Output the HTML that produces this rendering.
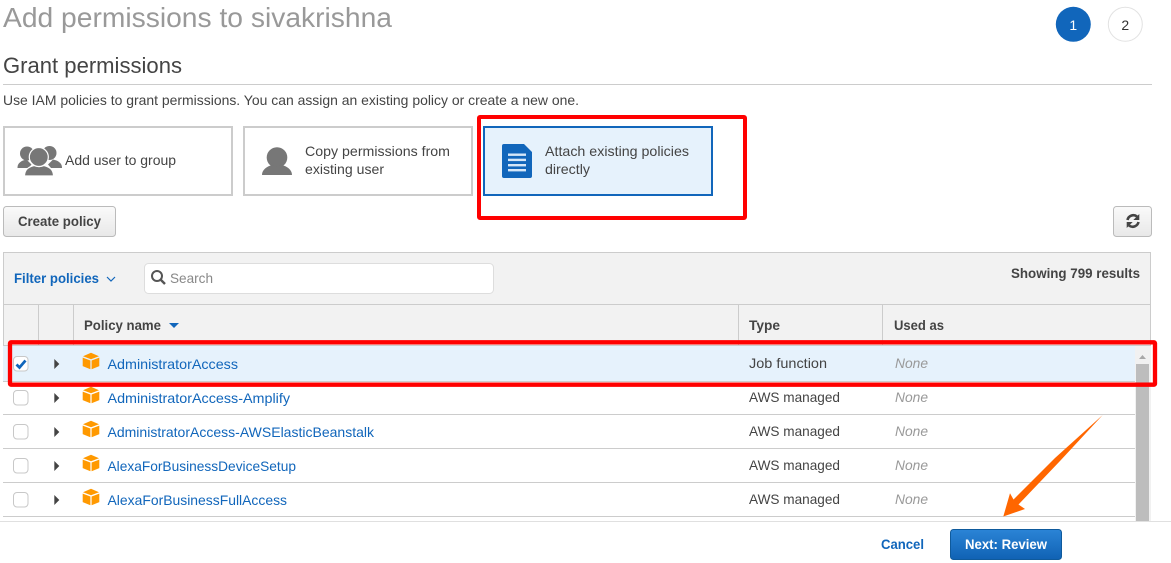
<!DOCTYPE html>
<html><head><meta charset="utf-8"><style>
html,body{margin:0;padding:0;background:#fff;width:1171px;height:563px;overflow:hidden}
svg{display:block}
text{font-family:"Liberation Sans",sans-serif;font-size:14px;fill:#444}
.b{font-weight:700}.l{fill:#1166bb}.n{font-style:italic;fill:#999}.h{fill:#444;font-weight:700}
</style></head><body>
<svg width="1171" height="563" viewBox="0 0 1171 563" xmlns="http://www.w3.org/2000/svg">
<defs>
<linearGradient id="g" x1="0" y1="0" x2="0" y2="1"><stop offset="0" stop-color="#fafafa"/><stop offset="1" stop-color="#e8e8e8"/></linearGradient>
<linearGradient id="bl" x1="0" y1="0" x2="0" y2="1"><stop offset="0" stop-color="#2b84d6"/><stop offset="1" stop-color="#1062b4"/></linearGradient>
<g id="cube"><path d="M0.300 3.600 8.300 0 16.300 3.600 8.300 6.600Z" fill="#f90"/><path d="M0 4.900 7.700 7.800V16.600L0 13.400Z" fill="#f90"/><path d="M16.600 4.900 8.900 7.800V16.600L16.600 13.400Z" fill="#f90"/></g>
<g id="tri"><path d="M0.300 0 5.300 5 0.300 10Z" fill="#444"/></g>
<g id="cb"><rect x="0.500" y="0.500" width="14.500" height="14.500" rx="3.500" fill="#fff" stroke="#c8c8c8"/></g>
</defs>

<text x="3" y="27" style="font-size:28px;fill:#999" textLength="389" lengthAdjust="spacingAndGlyphs">Add permissions to sivakrishna</text>
<circle cx="1073.300" cy="24.300" r="17.500" fill="#1166bb"/>
<text x="1073.300" y="30" text-anchor="middle" style="fill:#fff">1</text>
<circle cx="1125.300" cy="24.300" r="17" fill="#fff" stroke="#e2e2e2"/>
<text x="1125.300" y="30" text-anchor="middle" style="fill:#333">2</text>

<text x="3" y="73" style="font-size:22px;fill:#444" textLength="179" lengthAdjust="spacingAndGlyphs">Grant permissions</text>
<rect x="3" y="84" width="1149" height="1" fill="#ccc"/>
<text x="3" y="105" textLength="576" lengthAdjust="spacingAndGlyphs">Use IAM policies to grant permissions. You can assign an existing policy or create a new one.</text>

<rect x="4" y="127" width="228" height="68" fill="#fff" stroke="#ccc" stroke-width="2"/>
<g fill="#777">
<circle cx="27" cy="153.500" r="7"/><circle cx="49.500" cy="153" r="7"/>
<path d="M17.500 167.500c0-4.500 4-7 9-8l5 5-3 3.500H17.500ZM62 167.500c0-4.500-4-7-9-8l-5 5 3 3.500h11Z"/>
<circle cx="38.800" cy="157" r="9.500" stroke="#fff" stroke-width="1.200"/>
<path d="M24.500 176c0-6.500 4-9 9.500-10.500 3 1.500 7 1.500 10 0 5.500 1.500 9.500 4 9.500 10.500Z" stroke="#fff" stroke-width="1.200"/>
</g>
<text x="65" y="165" textLength="111" lengthAdjust="spacingAndGlyphs">Add user to group</text>

<rect x="244" y="127" width="228" height="68" fill="#fff" stroke="#ccc" stroke-width="2"/>
<g fill="#777"><circle cx="277" cy="157.500" r="10.300"/><path d="M262 175c0-5.500 5-8.500 10-10 3 1.500 7 1.500 10 0 5 1.500 10 4.500 10 10Z"/></g>
<text x="305" y="156" textLength="145" lengthAdjust="spacingAndGlyphs">Copy permissions from</text>
<text x="305" y="174" textLength="79" lengthAdjust="spacingAndGlyphs">existing user</text>

<rect x="484" y="127" width="228" height="68" fill="#e6f2fc" stroke="#1166bb" stroke-width="2"/>
<path d="M504 144h20l8 8v24a2 2 0 0 1-2 2h-26a2 2 0 0 1-2-2v-30a2 2 0 0 1 2-2Z" fill="#1166bb"/>
<g fill="#d5e7f8"><rect x="508" y="153.500" width="18" height="2.400"/><rect x="508" y="158.700" width="18" height="2.400"/><rect x="508" y="164" width="18" height="2.400"/><rect x="508" y="169" width="18" height="2.400"/></g>
<text x="545" y="156" textLength="144" lengthAdjust="spacingAndGlyphs">Attach existing policies</text>
<text x="545" y="174" textLength="45" lengthAdjust="spacingAndGlyphs">directly</text>

<rect x="3.500" y="206.500" width="112" height="30" rx="3" fill="url(#g)" stroke="#bbb"/>
<text x="18" y="226" class="b" textLength="83" lengthAdjust="spacingAndGlyphs">Create policy</text>
<rect x="1113.500" y="206.500" width="38" height="30" rx="3" fill="url(#g)" stroke="#bbb"/>
<g fill="none" stroke="#444" stroke-width="2.600"><path d="M1127.500 220a6 6 0 0 1 9.500-3.500"/><path d="M1138.500 222a6 6 0 0 1-9.500 3.500"/></g>
<path d="M1139.300 214v6h-6ZM1126.700 228v-6h6Z" fill="#444"/>

<rect x="3.500" y="252.500" width="1147" height="52" fill="#f2f2f2" stroke="#ccc"/>
<text x="14" y="283" class="b l" textLength="85" lengthAdjust="spacingAndGlyphs">Filter policies</text>
<path d="M107 277l4 4 4-4" fill="none" stroke="#1166bb" stroke-width="1.200"/>
<rect x="144.500" y="263.500" width="349" height="30" rx="4" fill="#fff" stroke="#ddd"/>
<circle cx="157" cy="276" r="5" fill="none" stroke="#555" stroke-width="2"/><path d="M161 280l4 4" stroke="#555" stroke-width="2.400"/>
<text x="170" y="283" style="fill:#888" textLength="43" lengthAdjust="spacingAndGlyphs">Search</text>
<text x="1011" y="278" class="b" textLength="129" lengthAdjust="spacingAndGlyphs">Showing 799 results</text>

<rect x="3.500" y="304.500" width="1147" height="41" fill="#f2f2f2" stroke="#ccc"/>
<g fill="#ccc"><rect x="38" y="305" width="1" height="41"/><rect x="73" y="305" width="1" height="41"/><rect x="738" y="305" width="1" height="41"/><rect x="882" y="305" width="1" height="41"/></g>
<text x="84" y="330" class="h" textLength="77" lengthAdjust="spacingAndGlyphs">Policy name</text>
<path d="M169 323h10l-5 5Z" fill="#1166bb"/>
<text x="749" y="330" class="h" textLength="31" lengthAdjust="spacingAndGlyphs">Type</text>
<text x="894" y="330" class="h" textLength="50" lengthAdjust="spacingAndGlyphs">Used as</text>

<rect x="3" y="346" width="1132" height="35" fill="#e6f2fc"/>
<g fill="#ccc"><rect x="3" y="381" width="1132" height="1"/><rect x="3" y="414" width="1132" height="1"/><rect x="3" y="448" width="1132" height="1"/><rect x="3" y="482" width="1132" height="1"/><rect x="3" y="516" width="1132" height="1"/></g>

<use href="#cb" x="13" y="356"/><path d="M16.500 364.500l3 3 6-7" fill="none" stroke="#1166bb" stroke-width="2.800"/>
<use href="#cb" x="13" y="390"/><use href="#cb" x="13" y="424"/><use href="#cb" x="13" y="458"/><use href="#cb" x="13" y="492"/>
<use href="#tri" x="54" y="359"/><use href="#tri" x="54" y="393"/><use href="#tri" x="54" y="427"/><use href="#tri" x="54" y="461"/><use href="#tri" x="54" y="495"/>
<use href="#cube" x="82.700" y="352.700"/><use href="#cube" x="82.700" y="386.700"/><use href="#cube" x="82.700" y="420.700"/><use href="#cube" x="82.700" y="454.700"/><use href="#cube" x="82.700" y="488.700"/>

<text x="107.500" y="369" class="l" textLength="130.500" lengthAdjust="spacingAndGlyphs">AdministratorAccess</text>
<text x="107.500" y="403" class="l" textLength="182.500" lengthAdjust="spacingAndGlyphs">AdministratorAccess-Amplify</text>
<text x="107.500" y="437" class="l" textLength="266.500" lengthAdjust="spacingAndGlyphs">AdministratorAccess-AWSElasticBeanstalk</text>
<text x="107.500" y="471" class="l" textLength="188.500" lengthAdjust="spacingAndGlyphs">AlexaForBusinessDeviceSetup</text>
<text x="107.500" y="505" class="l" textLength="179.500" lengthAdjust="spacingAndGlyphs">AlexaForBusinessFullAccess</text>

<text x="749" y="368" textLength="78" lengthAdjust="spacingAndGlyphs">Job function</text>
<text x="749" y="402" textLength="91" lengthAdjust="spacingAndGlyphs">AWS managed</text>
<text x="749" y="436" textLength="91" lengthAdjust="spacingAndGlyphs">AWS managed</text>
<text x="749" y="470" textLength="91" lengthAdjust="spacingAndGlyphs">AWS managed</text>
<text x="749" y="504" textLength="91" lengthAdjust="spacingAndGlyphs">AWS managed</text>
<text x="895" y="368" class="n" textLength="33" lengthAdjust="spacingAndGlyphs">None</text>
<text x="895" y="402" class="n" textLength="33" lengthAdjust="spacingAndGlyphs">None</text>
<text x="895" y="436" class="n" textLength="33" lengthAdjust="spacingAndGlyphs">None</text>
<text x="895" y="470" class="n" textLength="33" lengthAdjust="spacingAndGlyphs">None</text>
<text x="895" y="504" class="n" textLength="33" lengthAdjust="spacingAndGlyphs">None</text>

<rect x="1135" y="346" width="16" height="175" fill="#f1f1f1"/>
<rect x="1136" y="364" width="13" height="157" fill="#bdbdbd"/>
<path d="M1139 359l3.500-4 3.500 4Z" fill="#a8a8a8"/>

<rect x="0" y="521" width="1171" height="42" fill="#fff"/>
<rect x="0" y="521" width="1171" height="1" fill="#e0e0e0"/>
<text x="881" y="549" class="b l" textLength="43" lengthAdjust="spacingAndGlyphs">Cancel</text>
<rect x="950.500" y="529.500" width="111" height="30" rx="3" fill="url(#bl)" stroke="#0f5a9c"/>
<text x="965" y="549" class="b" style="fill:#fff" textLength="82" lengthAdjust="spacingAndGlyphs">Next: Review</text>

<rect x="479" y="117" width="266" height="101" rx="1" fill="none" stroke="#f00" stroke-width="4"/>
<rect x="10" y="342.300" width="1145" height="42.400" rx="1" fill="none" stroke="#f00" stroke-width="4.300"/>
<path d="M1102.700 415 1055 458 1013.500 499.500 1010 493.300 1003.300 516.500 1025 509 1018.500 504.500 1060 461Z" fill="#f60"/>
</svg>
</body></html>
